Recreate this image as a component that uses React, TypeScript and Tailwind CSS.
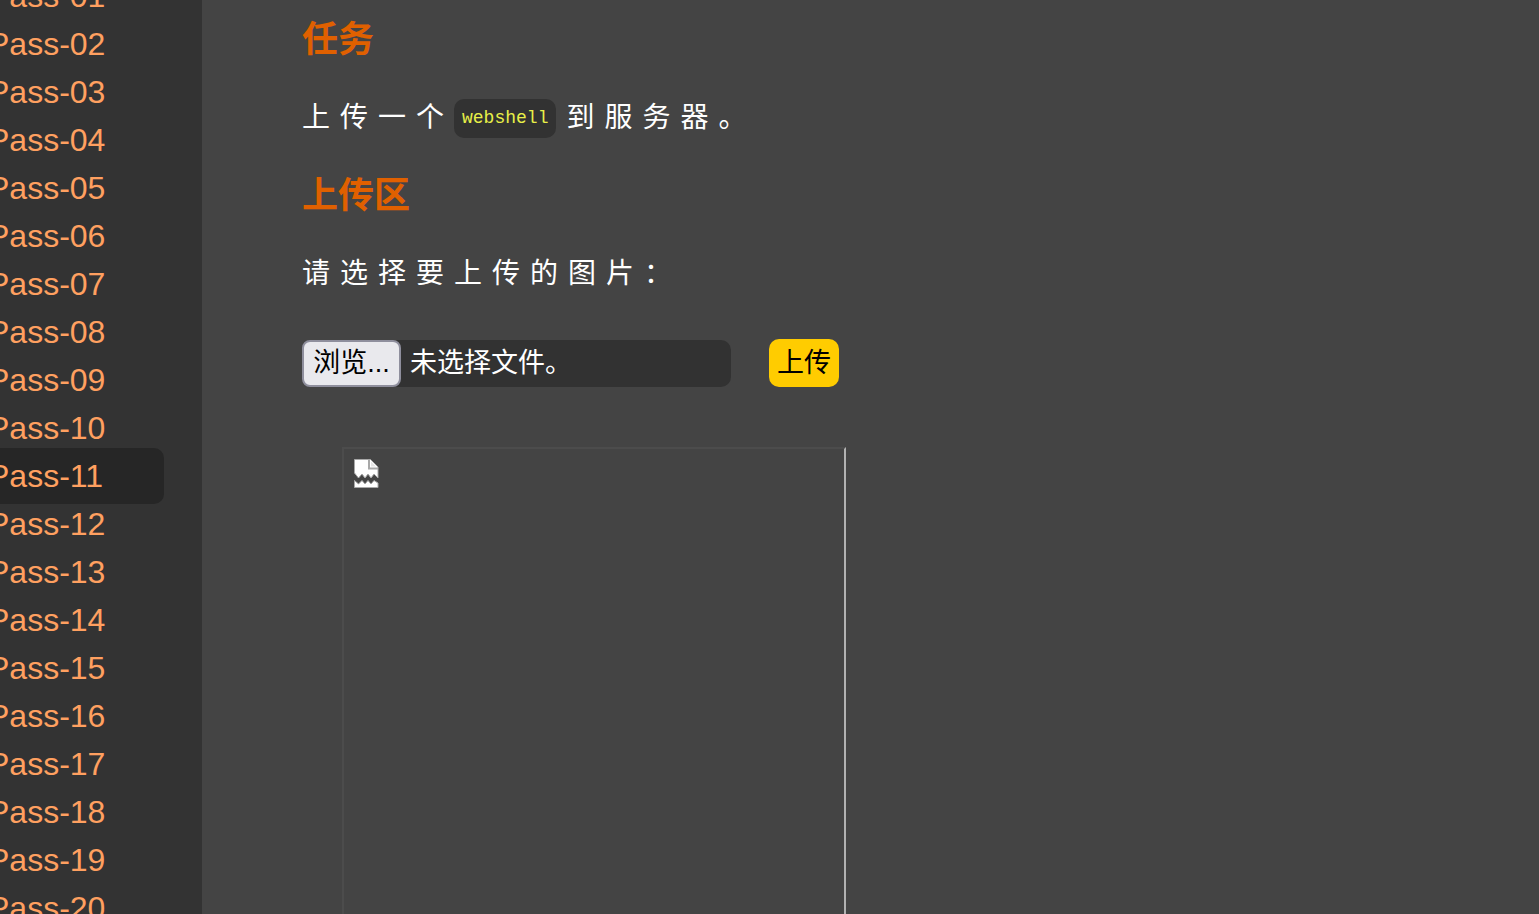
import { useRef, useState } from "react";

const passes = Array.from({ length: 21 }, (_, i) => `Pass-${String(i + 1).padStart(2, "0")}`);
const current = "Pass-11";

function Sidebar() {
  return (
    <nav className="w-[202px] shrink-0 overflow-hidden bg-[#333333]">
      <ul className="-mt-7 -ml-9 mr-[38px]">
        {passes.map((name) => (
          <li key={name} className="flex h-12 items-center">
            <a
              href={`#${name}`}
              aria-current={name === current ? "page" : undefined}
              className={
                name === current
                  ? "h-14 w-full shrink-0 rounded-[10px] bg-[#262626] pl-6 text-[32px] leading-[56px] text-[#ffa060]"
                  : "h-14 w-full shrink-0 rounded-[10px] pl-6 text-[32px] leading-[56px] text-[#ffa060]"
              }
            >
              {name}
            </a>
          </li>
        ))}
      </ul>
    </nav>
  );
}

function BrokenImageIcon() {
  return (
    <svg width="25" height="30" viewBox="0 0 25 30" role="img" aria-label="图片">
      <path d="M.5.5h16l7.500 7.500v11l-4-4-3 4-3-4-3 4-3-4-3.500 4-4-5z" fill="#fff" stroke="#a8a8a8" />
      <path d="M15 1v8.500h9" fill="none" stroke="#a8a8a8" strokeWidth="2" />
      <path d="M17 2.500v5h5z" fill="#e4e4e4" />
      <path d="M.5 28.500v-7l4 3.500 3.500-3.500 3 3.500 3-3.500 3 3.500 3-3.500 4 2.500v4.500z" fill="#fff" stroke="#a8a8a8" />
    </svg>
  );
}

function FilePicker() {
  const input = useRef<HTMLInputElement>(null);
  const [fileName, setFileName] = useState("未选择文件。");
  return (
    <div className="relative flex h-[47px] w-[429px] items-center rounded-[10px] bg-[#323232] text-[27px] text-white">
      <button
        type="button"
        onClick={() => input.current?.click()}
        className="flex h-[47px] w-[99px] shrink-0 items-center justify-center rounded-lg border-2 border-[#8f8f9d] bg-[#e9e9ed] text-black"
      >
        浏览...
      </button>
      <span className="truncate pl-[9px]">{fileName}</span>
      <input
        ref={input}
        id="upload_file"
        type="file"
        tabIndex={-1}
        className="sr-only"
        onChange={(e) => setFileName(e.target.files?.[0]?.name ?? "未选择文件。")}
      />
    </div>
  );
}

export default function App() {
  return (
    <div className="flex h-screen overflow-hidden bg-[#444444] font-['Liberation_Sans','Noto_Sans_CJK_SC',sans-serif]">
      <Sidebar />
      <main className="min-w-0 flex-1 pt-4 pl-[100px]">
        <div className="flex flex-col gap-[30px] text-[28px] leading-[48px] text-white">
          <h3 className="text-4xl leading-[48px] font-bold text-[#e06000]">任务</h3>
          <p className="flex items-center tracking-[10px]">
            上传一个
            <code className="mr-[10px] h-[39px] rounded-[10px] bg-[#323232] px-2 font-['Liberation_Mono',monospace] text-lg leading-[39px] tracking-normal text-[#e8f048]">
              webshell
            </code>
            到服务器。
          </p>
          <h3 className="text-4xl leading-[48px] font-bold text-[#e06000]">上传区</h3>
          <p className="tracking-[10px]">
            <label htmlFor="upload_file">请选择要上传的图片：</label>
          </p>
        </div>
        <form className="mt-[41px] flex items-center gap-[38px]" onSubmit={(e) => e.preventDefault()}>
          <FilePicker />
          <button type="submit" className="h-12 rounded-[10px] bg-[#ffcc00] px-2 text-[27px] text-black">
            上传
          </button>
        </form>
        <div className="mt-[60px] ml-10 h-[504px] w-[504px] border-2 border-t-[#4c4c4c] border-r-[#b2b2b2] border-b-[#b2b2b2] border-l-[#4c4c4c] p-[10px]">
          <BrokenImageIcon />
        </div>
      </main>
    </div>
  );
}
